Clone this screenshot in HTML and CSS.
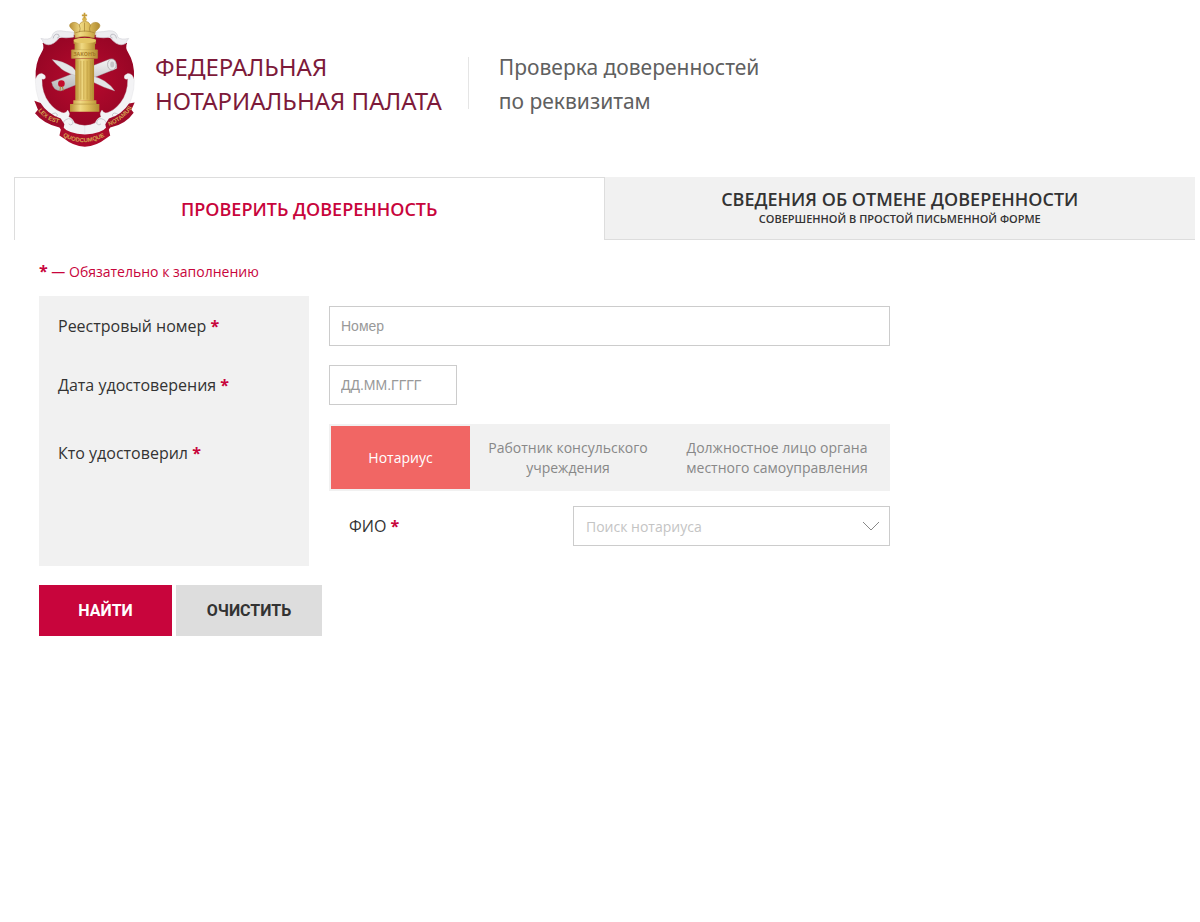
FILE: index.html
```
<!DOCTYPE html>
<html lang="ru">
<head>
    <meta charset="UTF-8">
    <meta name="viewport" content="width=device-width, initial-scale=1.0">
    <title>Проверка доверенностей по реквизитам</title>
    <link rel="stylesheet" href="styles.css">
</head>
<body>
    <!-- Шапка -->
    <header class="header">
        <svg class="logo" viewBox="40 36 306 412" role="img" aria-label="Герб Федеральной нотариальной палаты">
            <defs>
                <linearGradient id="gold" x1="0" x2="1" y1="0" y2="0">
                    <stop offset="0" stop-color="#b88f35"/>
                    <stop offset="0.35" stop-color="#f0da84"/>
                    <stop offset="0.6" stop-color="#dfc05f"/>
                    <stop offset="1" stop-color="#b08a30"/>
                </linearGradient>
                <linearGradient id="paper" x1="0" x2="0" y1="0" y2="1">
                    <stop offset="0" stop-color="#f5f5f5"/>
                    <stop offset="1" stop-color="#b4b4b7"/>
                </linearGradient>
                <radialGradient id="field" cx="0.5" cy="0.5" r="0.6">
                    <stop offset="0" stop-color="#b80a2e"/>
                    <stop offset="1" stop-color="#930524"/>
                </radialGradient>
                <path id="ribbonLeft" d="M52 334 Q74 366 126 376"/>
                <path id="ribbonMid" d="M127 412 Q194 451 265 407"/>
                <path id="ribbonRight" d="M268 381 Q312 364 342 320"/>
            </defs>
            <!-- красное поле -->
            <path d="M155 105 Q120 110 100 125 L66 130 Q73 145 62 160 Q43 190 45 235 Q52 290 80 325 Q130 372 194 382 Q258 372 308 325 Q337 290 343 235 Q345 190 326 160 Q315 145 322 130 L288 125 Q268 110 233 105 Z" fill="url(#field)"/>
            <!-- левая половина рамы, правая отражена -->
            <g id="frameHalf">
                <path d="M160 97 Q135 96 122 93 Q97 91 94 112 Q85 122 61 116 Q67 123 70 131 Q84 140 100 130 Q112 123 117 112 Q136 116 160 112 Z" fill="#ededf0" stroke="#d5d5da" stroke-width="2"/>
                <path d="M98 116 Q101 100 114 104 Q121 112 110 115" fill="none" stroke="#bdbdc4" stroke-width="3"/>
                <path d="M44 242 Q49 221 64 222 Q78 227 74 237 Q69 242 64 238 Q63 281 86 311 Q101 330 116 337 Q136 348 142 333 Q151 344 145 353 Q158 358 163 372 Q175 379 194 380 V414 Q148 410 124 381 Q120 364 99 360 Q60 332 52 295 Q44 270 44 242 Z" fill="#f3f3f5" stroke="#dadade" stroke-width="1"/>
                <path d="M90 360 Q88 343 105 342 Q116 347 106 355 M128 381 Q126 363 145 359 Q158 360 158 374 Q151 382 145 375" fill="none" stroke="#c9c9cf" stroke-width="3"/>
            </g>
            <use href="#frameHalf" transform="translate(388 0) scale(-1 1)"/>
            <!-- свиток и перо -->
            <path d="M93 248 L270 178 Q293 180 291 207 L121 275 Q98 275 93 248 Z" fill="url(#paper)" stroke="#88888c" stroke-width="1"/>
            <ellipse cx="276" cy="195" rx="13" ry="17" fill="#e9e9ea" stroke="#a0a0a3" stroke-width="2"/>
            <ellipse cx="277" cy="195" rx="6" ry="9" fill="#c5c5c8"/>
            <path d="M95 180 Q126 184 157 203 L168 216 V229 Q127 217 116 201 Q109 197 95 180 Z M220 231 Q259 240 285 275 Q252 266 220 249 Z" fill="#e4e4e6" stroke="#a6a6aa" stroke-width="1"/>
            <circle cx="123" cy="253" r="10" fill="#c40b2b"/>
            <path d="M120 262 L119 275 M126 262 L129 274" stroke="#b1852a" stroke-width="3"/>
            <!-- колонна -->
            <path d="M160 119 Q194 109 228 119 V132 H160 Z" fill="url(#gold)"/>
            <ellipse cx="194" cy="123" rx="34" ry="8" fill="#e4c664"/>
            <rect x="163" y="130" width="62" height="22" fill="url(#gold)"/>
            <rect x="153" y="150" width="80" height="27" rx="2" fill="url(#gold)" stroke="#b3903f" stroke-width="1"/>
            <text class="logo-law" x="193" y="169">ЗАКОНЪ</text>
            <rect x="165" y="178" width="57" height="126" fill="url(#gold)"/>
            <path d="M173 184 V301 M182 184 V301 M191 184 V301 M201 184 V301 M211 184 V301" stroke="#bd983f" stroke-width="2"/>
            <path d="M159 303 H229 V315 H238 V338 H149 V315 H159 Z" fill="url(#gold)"/>
            <path d="M159 315 H229" stroke="#b3903f" stroke-width="2"/>
            <!-- корона -->
            <path d="M162 94 Q141 79 151 71 Q165 62 177 75 Q182 64 194 64 Q206 64 211 75 Q223 62 237 71 Q246 80 226 95 L222 115 Q194 105 165 115 Z" fill="url(#gold)" stroke="#b3903f" stroke-width="2"/>
            <path d="M177 75 Q182 86 178 97 M211 75 Q206 86 210 97 M193 68 V95 M165 99 Q194 88 223 99" fill="none" stroke="#a17d31" stroke-width="2"/>
            <circle cx="193" cy="58" r="7" fill="#d9b551"/>
            <path d="M193 38 V55 M185 46 H201" stroke="#c69c38" stroke-width="5"/>
            <!-- лента -->
            <path d="M41 305 L60 312 Q80 345 121 359 L132 376 L127 400 L117 386 Q70 376 43 343 L52 332 Z" fill="#9f0b2a"/>
            <path d="M345 310 L328 313 Q308 345 267 359 L256 376 L261 400 L271 386 Q318 376 342 341 L335 332 Z" fill="#9f0b2a"/>
            <path d="M124 381 Q144 405 194 407 Q244 405 264 381 L271 410 L257 420 Q230 442 194 444 Q158 442 132 420 L117 410 Z" fill="#ad0c2c"/>
            <g class="logo-motto">
                <text><textPath href="#ribbonLeft">LEX EST</textPath></text>
                <text><textPath href="#ribbonMid">QUODCUMQUE</textPath></text>
                <text><textPath href="#ribbonRight">NOTAMUS</textPath></text>
            </g>
        </svg>
        <div class="org-name">ФЕДЕРАЛЬНАЯ<br>НОТАРИАЛЬНАЯ ПАЛАТА</div>
        <h1 class="service-name">Проверка доверенностей<br>по реквизитам</h1>
    </header>

    <!-- Вкладки -->
    <nav class="tabs">
        <a class="tab active" href="#check">Проверить доверенность</a>
        <a class="tab" href="#cancel">Сведения об отмене доверенности
            <small>совершенной в простой письменной форме</small>
        </a>
    </nav>

    <!-- Форма проверки -->
    <form class="check-form" id="check">
        <p class="required-note"><span class="star">*</span> — Обязательно к заполнению</p>

        <div class="form-row">
            <label class="form-label" for="number">Реестровый номер <span class="star">*</span></label>
            <div class="form-field">
                <input type="text" class="text-box" id="number" placeholder="Номер">
            </div>
        </div>

        <div class="form-row">
            <label class="form-label" for="date">Дата удостоверения <span class="star">*</span></label>
            <div class="form-field">
                <input type="text" class="text-box date-box" id="date" placeholder="ДД.ММ.ГГГГ">
            </div>
        </div>

        <div class="form-row certifier-row">
            <div class="form-label" id="certifierLabel">Кто удостоверил <span class="star">*</span></div>
            <div class="form-field">
                <div class="switcher" role="group" aria-labelledby="certifierLabel">
                    <button type="button" class="switch-btn active">Нотариус</button>
                    <button type="button" class="switch-btn consul">Работник консульского учреждения</button>
                    <button type="button" class="switch-btn official">Должностное лицо органа местного самоуправления</button>
                </div>
                <div class="notary-row">
                    <label class="notary-label" for="notary">ФИО <span class="star">*</span></label>
                    <div class="select-wrap">
                        <select class="select-box" id="notary">
                            <option>Поиск нотариуса</option>
                        </select>
                        <svg class="select-arrow" viewBox="0 0 18 10" aria-hidden="true">
                            <path d="M1 1 L9 9 L17 1" fill="none" stroke="#888" stroke-width="1"/>
                        </svg>
                    </div>
                </div>
            </div>
        </div>

        <div class="form-actions">
            <button type="submit" class="btn btn-find">НАЙТИ</button>
            <button type="reset" class="btn btn-clear">ОЧИСТИТЬ</button>
        </div>
    </form>
</body>
</html>
```
FILE: styles.css
```
* {
    margin: 0;
    padding: 0;
    box-sizing: border-box;
}

body {
    background-color: #fff;
    color: #333;
    font-family: "Open Sans", "Noto Sans", sans-serif;
    font-size: 16px;
    line-height: 20px;
}

/* Шапка */
.header {
    display: flex;
    align-items: center;
    padding: 12px 34px 29px;
}

.logo {
    width: 101px;
    height: 136px;
    flex: none;
}

.logo-law {
    font-size: 16px;
    font-weight: 700;
    text-anchor: middle;
    fill: #a67b2a;
}

.logo-motto {
    font-family: "Liberation Sans", Arial, sans-serif;
    font-size: 18px;
    font-weight: 700;
    fill: #d6a650;
}

.org-name,
.service-name {
    padding-top: 7px;
    font-family: "Noto Sans", sans-serif;
    font-weight: 400;
    line-height: 34px;
}

.org-name {
    margin-left: 20px;
    padding-right: 26px;
    color: #7d1a3a;
    font-size: 24px;
}

.service-name {
    position: relative;
    padding-left: 31px;
    color: #606060;
    font-size: 21px;
}

.service-name::before {
    content: "";
    position: absolute;
    left: 0;
    top: 14px;
    bottom: 9px;
    border-left: 1px solid #e5e5e5;
}

/* Вкладки */
.tabs {
    display: flex;
    margin: 0 5px 0 14px;
}

.tab {
    display: flex;
    flex-direction: column;
    align-items: center;
    justify-content: center;
    width: 50%;
    height: 63px;
    border-bottom: 1px solid #ddd;
    background-color: #f1f1f1;
    color: #333;
    font-size: 18px;
    font-weight: 600;
    line-height: 22px;
    text-align: center;
    text-decoration: none;
    text-transform: uppercase;
}

.tab small {
    font-size: 11px;
    line-height: 18px;
}

.tab.active {
    border: 1px solid #ddd;
    border-bottom: none;
    background-color: #fff;
    color: #c8053c;
}

/* Форма проверки */
.check-form {
    max-width: 890px;
    padding-left: 39px;
}

.required-note {
    padding: 22px 0 14px;
    color: #c8053c;
    font-size: 14px;
}

.star {
    color: #c8053c;
    font-size: 16px;
    font-weight: 700;
    line-height: 16px;
}

.form-row {
    display: flex;
}

.form-label {
    flex: none;
    width: 270px;
    padding: 20px 19px 19px;
    background-color: #f1f1f1;
}

.form-field {
    flex: 1;
    padding: 10px 0 9px 20px;
}

.text-box {
    display: block;
    width: 100%;
    height: 40px;
    padding: 0 11px;
    border: 1px solid #ccc;
    outline: none;
    color: #333;
    font-family: "Liberation Sans", Arial, sans-serif;
    font-size: 14px;
}

.text-box::placeholder {
    color: #999;
}

.text-box:focus {
    border-color: #999;
}

.date-box {
    width: 128px;
}

/* Кто удостоверил */
.certifier-row .form-label {
    padding-top: 29px;
}

.certifier-row .form-field {
    padding-bottom: 20px;
}

.switcher {
    display: flex;
    padding: 2px;
    background-color: #f1f1f1;
}

.switch-btn {
    flex: 139 0 0;
    height: 63px;
    border: none;
    background-color: transparent;
    color: #888;
    font-family: inherit;
    font-size: 14px;
    line-height: 20px;
    cursor: pointer;
}

.switch-btn.consul {
    flex-grow: 196;
}

.switch-btn.official {
    flex-grow: 222;
}

.switch-btn.active {
    background-color: #f16664;
    color: #fff;
}

.notary-row {
    display: flex;
    align-items: center;
    justify-content: space-between;
    padding: 15px 0 0 20px;
}

.select-wrap {
    position: relative;
    width: 317px;
}

.select-box {
    display: block;
    width: 100%;
    height: 40px;
    padding: 0 40px 0 12px;
    border: 1px solid #ccc;
    background-color: #fff;
    color: #c4c4c4;
    font-family: inherit;
    font-size: 14px;
    appearance: none;
}

.select-arrow {
    position: absolute;
    right: 10px;
    top: 15px;
    width: 18px;
    height: 10px;
    pointer-events: none;
}

/* Кнопки */
.form-actions {
    display: flex;
    gap: 4px;
    padding-top: 19px;
}

.btn {
    height: 51px;
    border: none;
    font-family: Roboto, Arial, sans-serif;
    font-size: 16px;
    font-weight: 700;
    cursor: pointer;
}

.btn-find {
    width: 133px;
    background-color: #c8053c;
    color: #fff;
}

.btn-clear {
    width: 146px;
    background-color: #ddd;
    color: #333;
}
```
